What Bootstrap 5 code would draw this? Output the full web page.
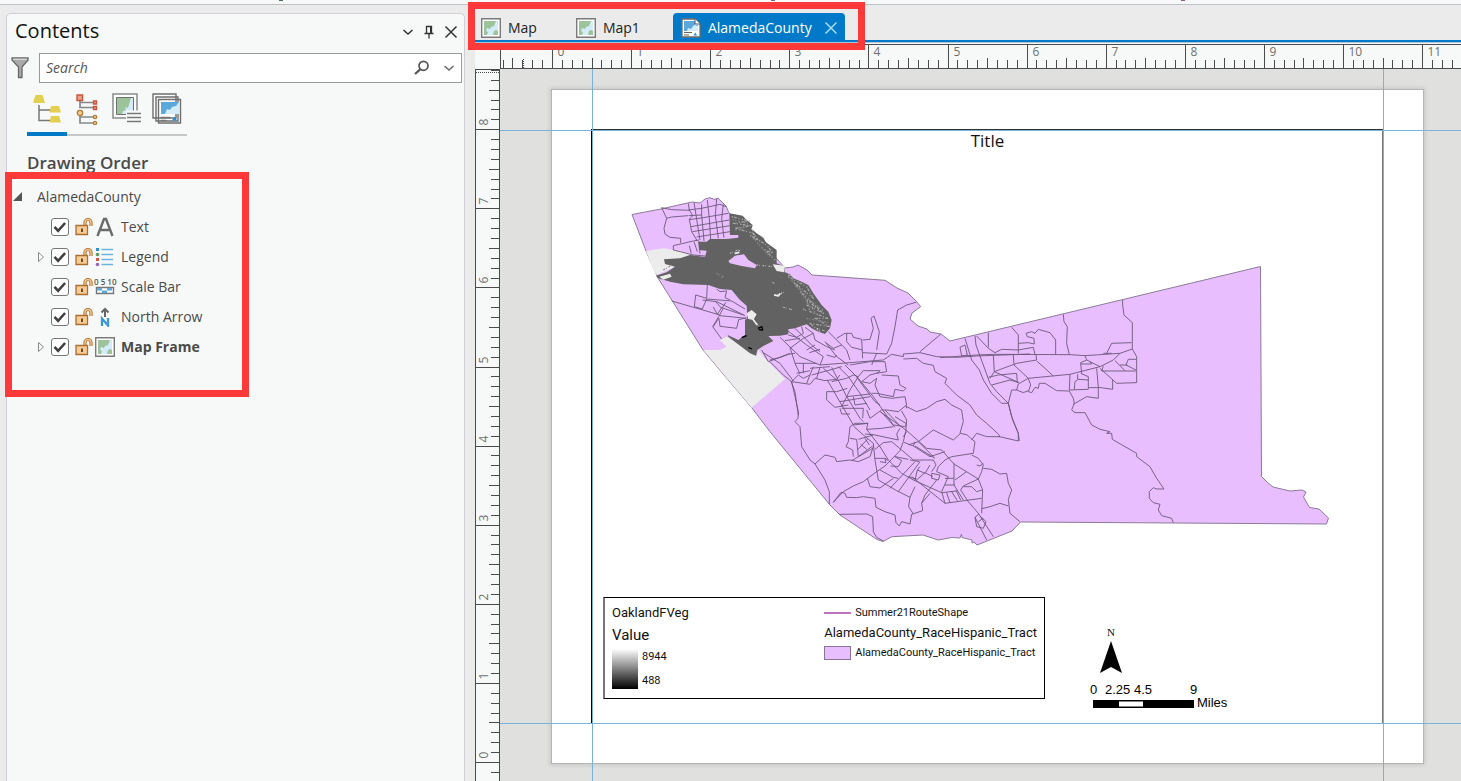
<!DOCTYPE html>
<html lang="en">
<head>
<meta charset="utf-8">
<meta name="viewport" content="width=device-width, initial-scale=1">
<title>AlamedaCounty layout</title>
<link rel="stylesheet" href="https://cdn.jsdelivr.net/npm/bootstrap@5.3.0/dist/css/bootstrap.min.css">
<style>
:root{--ui:"Open Sans","Noto Sans",sans-serif;--line:#4b4b4b;--guide:#79b4d8;--accent:#007ac8;--mark:#fd3a39}
body{font-family:var(--ui);font-size:14px;line-height:20px;color:#4a4a4a;background:#ebebeb;overflow:hidden}
button{background:none;border:0;padding:0;color:inherit}
svg{display:block;flex:none}
.ribbon-edge{height:5px;background:#f7f9f8;border-bottom:1px solid #bfc1c7;overflow:hidden}
.ribbon-edge i{width:4px;height:1px;position:absolute;top:0}
.panes{min-height:0}
.pane{width:459px;margin:8px 10px 0 6px;background:#f7f9f8;border:1px solid #cfd1d6;border-bottom:0;border-radius:5px 5px 0 0}
.pane-title{font-size:20px;line-height:24px;color:#111}
.pane-head{padding:5px 6px 0 8px;height:39px}
.pane-tools{gap:9px;padding-top:5px}
.pane-search{padding:0 2px 0 4px;height:30px}
.find-box{border:1px solid #9a9a9a;background:#fff;margin-left:10px;padding-right:6px}
.find-box input{border:0;outline:0;background:none;font-style:italic;padding:0 6px;color:#4a4a4a;min-width:0}
.find-box input::placeholder{color:#555;opacity:1}
.find-box .more{margin-left:13px}
.view-tabs{margin:9px 0 0 20px;width:160px;border-bottom:2px solid #c6c8c8}
.view-tabs button{width:40px;height:42px;padding-top:1px}
.view-tabs button.active{border-bottom:4px solid var(--accent);margin-bottom:-2px;height:44px}
.pane h2{font-size:17px;line-height:22px;font-weight:600;color:#4a4a4a;margin:16px 0 0 20px}
.tree-wrap{position:relative;margin-top:8px}
.tree li{height:30px;padding-left:30px}
.tree .root{padding-left:6px}
.tree .twist{width:8px;margin-right:6px}
.tree .root .twist{width:10px;margin-right:14px}
.tree .form-check-input{width:18px;height:18px;margin:0 6px 0 0;border:1px solid #777;border-radius:3px;background-color:#fff;flex:none}
.tree .form-check-input:checked{background-size:18px 18px;background-image:url("data:image/svg+xml,%3Csvg xmlns='http://www.w3.org/2000/svg' viewBox='0 0 18 18'%3E%3Cpath d='M3.5 8.8l3.6 4 7-7.8' fill='none' stroke='%23404040' stroke-width='2.6'/%3E%3C/svg%3E")}
.tree .glyph{width:20px;margin:0 6px 0 2px}
.mark-box{position:absolute;border:7px solid var(--mark);pointer-events:none;z-index:5}
.mark-tree{left:-2px;top:-10px;width:244px;height:225px}
.mark-tabs{left:-7px;top:-11px;width:397px;height:48px}
.work{min-width:0}
.tabs{position:relative;margin-top:8px;height:29px;border-bottom:2px solid var(--accent)}
.tabs button{padding:3px 33px 0 6px;color:#222}
.tabs button.active{background:var(--accent);color:#fff;border-radius:4px 4px 0 0;padding:3px 8px 0}
.tabs svg{margin-right:7px}
.tabs button.active .shut{margin:0 0 0 13px}
.sheet-view{display:grid;grid-template-columns:25px 1fr;grid-template-rows:25px 1fr;border-top:1px solid #a9c5d9;background:#f7f9f8;padding-top:1px}
.rule-h{border:solid var(--line);border-width:1px 0 1px 1px}
.rule-v{border:solid var(--line);border-width:1px 1px 0 1px;overflow:hidden}
.rule-h svg,.rule-v svg{width:100%;height:100%;overflow:visible}
.rule-h text,.rule-v text{font-size:12px;fill:#707070}
.rule-h path,.rule-v path{stroke:var(--line);fill:none}
.desk{position:relative;overflow:hidden;background:#e0e0df;padding:21px 0 0 52px}
.paper{width:871px;height:673px;background:#fff;box-shadow:0 0 0 1px #b5b5b5,0 0 4px 2px #c4c4c4;padding:39px 0 0 39px}
.frame{position:relative;width:792px;height:594px;border:solid #000;border-width:1px 1px 0 2px;border-top-color:#333;border-right-color:#777}
.frame>*{position:absolute}
.county{left:0;top:0}
.heading{left:0;right:0;top:0;text-align:center;font-size:17px;line-height:22px;color:#111}
.legend-box{left:10px;top:467px;width:442px;height:102px;border:1px solid #000;border-left:2px solid #777;font:11px/16px Roboto,sans-serif;color:#111;padding:7px}
.legend-box .lg{font-size:13px}
.legend-box .xl{font-size:15px;line-height:20px}
.legend-left{width:213px}
.ramp{width:26px;height:40px;background:linear-gradient(#fff,#000)}
.swatch{width:27px;height:14px;background:#e8beff;border:1px solid #8b7399}
.route{width:27px;height:2px;background:#bf73bd}
.compass{left:506px;top:495px;width:24px;text-align:center;font:11px/15px "Liberation Serif",serif;color:#111}
.scale{left:497px;top:552px;font:13px/15px "Liberation Sans",sans-serif;color:#000}
.guide{position:absolute;background:var(--guide)}
.guide.v{width:1px;top:0;bottom:0}
.guide.h{height:1px;left:0;right:0}
.g1{left:92px}.g2{left:883px}.g3{top:61px}.g4{top:654px}
</style>
</head>
<body class="vh-100 d-flex flex-column">
<svg width="0" height="0" class="position-absolute" aria-hidden="true">
<defs>
<symbol id="lock" viewBox="0 0 18 18"><path d="M10 8V4.500a3 3 0 0 1 6 0V8" fill="none" stroke="#a96f32" stroke-width="3.200"/><path d="M10 8V4.500a3 3 0 0 1 6 0V8" fill="none" stroke="#f5c68b" stroke-width="1.400"/><path d="M1 7.500h11.500v9H1z" fill="#f8cb95" stroke="#a96f32" stroke-width="1.300"/><path d="M6 10.500h2v3.500H6z" fill="#6b4a2b"/></symbol>
<symbol id="mapico" viewBox="0 0 20 20"><path d="M.7.7h18.600v18.600H.7z" fill="#fff" stroke="#7b7b7b" stroke-width="1.400"/><path d="M3 3h14v14H3z" fill="#9cc39a"/><path d="M15 3h2v14H6l1-3-2-1 1-3 3 1 1-2 3-1z" fill="#d4ecfa"/><path d="M12 17l1-4 2-1 2 1v4zM3 13l2-1 1 5H3z" fill="#9cc39a"/></symbol>
<symbol id="twist" viewBox="0 0 8 12"><path d="M1.500 1.500l5 4.500-5 4.500z" fill="#fff" stroke="#8a8a8a"/></symbol>
</defs>
</svg>

<header class="ribbon-edge position-relative flex-shrink-0"><i style="left:279px;background:#4a6b5a"></i><i style="left:771px;background:#866082"></i><i style="left:1181px;background:#866082"></i></header>

<div class="panes d-flex flex-grow-1">
<aside class="pane flex-shrink-0">
  <div class="pane-head d-flex align-items-start">
    <h1 class="pane-title mb-0 fw-normal flex-grow-1">Contents</h1>
    <div class="pane-tools d-flex align-items-center">
      <button aria-label="Menu"><svg width="12" height="16" viewBox="0 0 12 16"><path d="M1.500 6L6 10l4.500-4" fill="none" stroke="#333" stroke-width="1.500"/></svg></button>
      <button aria-label="Pin"><svg width="12" height="16" viewBox="0 0 12 16"><path d="M3.500 2.500h5v7h-5zM1.500 9.500h9M6 9.500v5" fill="none" stroke="#333" stroke-width="1.300"/><path d="M7 3h1.500v6H7z" fill="#333"/></svg></button>
      <button aria-label="Close"><svg width="14" height="16" viewBox="0 0 14 16"><path d="M1.500 2.500l11 11m0-11l-11 11" fill="none" stroke="#333" stroke-width="1.500"/></svg></button>
    </div>
  </div>
  <div class="pane-search d-flex">
    <button aria-label="Filter" class="d-flex align-items-start pt-1"><svg width="18" height="22" viewBox="0 0 18 22"><path d="M1 1h16v2l-6 7v10.500H7.500V10L1 3z" fill="#a9a9a9" stroke="#686868" stroke-width="1.300"/><path d="M2 2.200h14" stroke="#eee"/></svg></button>
    <div class="find-box flex-grow-1 d-flex align-items-center">
      <input type="text" class="flex-grow-1" placeholder="Search" aria-label="Search">
      <button aria-label="Find"><svg width="16" height="16" viewBox="0 0 16 16"><circle cx="9.500" cy="5.800" r="4.500" fill="none" stroke="#555" stroke-width="1.700"/><path d="M6.200 9.400L1 14" stroke="#555" stroke-width="2.200"/></svg></button>
      <button aria-label="Search options" class="more"><svg width="12" height="16" viewBox="0 0 12 16"><path d="M1.500 6L6 10l4.500-4" fill="none" stroke="#666" stroke-width="1.400"/></svg></button>
    </div>
  </div>
  <div class="view-tabs d-flex">
    <button class="active d-flex align-items-start justify-content-center" aria-label="List by drawing order"><svg width="30" height="32" viewBox="0 0 30 32"><path d="M7 12v15.500h12M7 17h12" fill="none" stroke="#777" stroke-width="1.500"/><path d="M3.500 2h7L13 10H1.500v-2zM19 13h8l2 6.500H17.500zM19 23h8l2 6.500H17.500z" fill="#e3cf50"/></svg></button>
    <button class="d-flex justify-content-center" aria-label="List by element type"><svg width="24" height="32" viewBox="0 0 24 32"><path d="M5 7v7.500h15M5 9.500h15M5 19v11h15M5 24h15" fill="none" stroke="#888" stroke-width="1.700"/><path d="M2 2h5.500v5.500H2zM18.500 8h3v3h-3zM18.500 13.500h3v3h-3z" fill="#eaa28e" stroke="#c8553b" stroke-width="1.400"/><g fill="#f8cb95" stroke="#b07830" stroke-width="1.200"><circle cx="5" cy="20" r="2.700"/><circle cx="20" cy="24" r="1.700"/><circle cx="20" cy="30" r="1.600"/></g></svg></button>
    <button class="d-flex justify-content-center" aria-label="List by map frame"><svg width="30" height="32" viewBox="0 0 30 32"><path d="M1 1h24v24H1z" fill="#fff" stroke="#8a8a8a" stroke-width="1.500"/><path d="M4.500 4.500h17v17h-17z" fill="#9cc39a" stroke="#707070"/><path d="M19 5h2v16H10l1-3 3-1-1-3 3 1z" fill="#d4ecfa"/><path d="M14 17.500h16V31H14z" fill="#f7f9f8"/><path d="M15 20.500h14M15 24.500h14M15 28.500h14" stroke="#777" stroke-width="1.500"/></svg></button>
    <button class="d-flex justify-content-center" aria-label="List by map series"><svg width="30" height="32" viewBox="0 0 30 32"><g fill="#fff" stroke="#6e6e6e" stroke-width="1.400"><path d="M1 1h23v24H1zM4 4h22v24H4zM6.500 6.500h22V30h-22z"/></g><path d="M9 9h18v12H9z" fill="#5ba8dd"/><path d="M13 21l2-5 3 1 2-3 4-1 3-4v12z" fill="#d4ecfa"/><path d="M8.500 24.500h10M8.500 27.500h6" stroke="#777" stroke-width="1.300"/><path d="M20 27.500l2.500-4 2.500 4z" fill="#2b8fd0"/></svg></button>
  </div>
  <h2>Drawing Order</h2>
  <div class="tree-wrap">
  <ul class="tree list-unstyled mb-0">
    <li class="root d-flex align-items-center"><svg class="twist" height="10" viewBox="0 0 10 10"><path d="M9 0v9H0z" fill="#555"/></svg>AlamedaCounty</li>
    <li class="d-flex align-items-center"><span class="twist"></span><input class="form-check-input" type="checkbox" id="c1" checked><svg width="18" height="18"><use href="#lock"/></svg><svg class="glyph" height="20" viewBox="0 0 20 20"><path d="M2.500 19L9 2h2l6.500 17M5 13h10" fill="none" stroke="#6b6b6b" stroke-width="2.400"/></svg><label for="c1">Text</label></li>
    <li class="d-flex align-items-center"><svg class="twist" height="12"><use href="#twist"/></svg><input class="form-check-input" type="checkbox" id="c2" checked><svg width="18" height="18"><use href="#lock"/></svg><svg class="glyph" height="20" viewBox="0 0 20 20"><path d="M6.500 2.500H18M6.500 7.500H18M6.500 12.500H18M6.500 17.500H18" stroke="#6cb2df" stroke-width="1.500"/><path d="M1 1h3v3H1z" fill="#2b8fd0"/><circle cx="2.500" cy="7.500" r="1.800" fill="#5d9b5d"/><path d="M1 11h3v3H1z" fill="#d1583c"/><circle cx="2.500" cy="17.500" r="1.800" fill="#9565b8"/></svg><label for="c2">Legend</label></li>
    <li class="d-flex align-items-center"><span class="twist"></span><input class="form-check-input" type="checkbox" id="c3" checked><svg width="18" height="18"><use href="#lock"/></svg><svg class="glyph overflow-visible" height="20" viewBox="0 0 20 20"><path d="M1.500 10.500h17v6h-17z" fill="#fff" stroke="#777" stroke-width="1.400"/><path d="M2 11h5v2.500H2zM12 11h5v2.500h-5zM7 13.500h5V16H7z" fill="#5ba8dd"/><text x="-1" y="8" font-size="8" font-weight="600" fill="#555">0 5 10</text></svg><label for="c3">Scale Bar</label></li>
    <li class="d-flex align-items-center"><span class="twist"></span><input class="form-check-input" type="checkbox" id="c4" checked><svg width="18" height="18"><use href="#lock"/></svg><svg class="glyph" height="20" viewBox="0 0 20 20"><path d="M10 10V2M6.500 5.500L10 2l3.500 3.500" fill="none" stroke="#666" stroke-width="2"/><path d="M7 19v-7.500l6 7V11" fill="none" stroke="#3d97d3" stroke-width="2.300"/></svg><label for="c4">North Arrow</label></li>
    <li class="d-flex align-items-center"><svg class="twist" height="12"><use href="#twist"/></svg><input class="form-check-input" type="checkbox" id="c5" checked><svg width="18" height="18"><use href="#lock"/></svg><svg class="glyph" height="20"><use href="#mapico"/></svg><label for="c5" class="fw-bold">Map Frame</label></li>
  </ul>
  <div class="mark-box mark-tree" aria-hidden="true"></div>
  </div>
</aside>

<main class="work flex-grow-1 d-flex flex-column">
  <div class="tabs d-flex flex-shrink-0">
    <button class="d-flex align-items-center"><svg width="20" height="20"><use href="#mapico"/></svg>Map</button>
    <button class="d-flex align-items-center"><svg width="20" height="20"><use href="#mapico"/></svg>Map1</button>
    <button class="active d-flex align-items-center"><svg width="20" height="20" viewBox="0 0 20 20"><path d="M1 1h13l5 5v13H1z" fill="#fff" stroke="#6e6e6e" stroke-width="1.300"/><path d="M3 3h11v4h3v6H3z" fill="#5ba8dd"/><path d="M6 13l1-3 3 1 3-4 4 1v5z" fill="#d4ecfa"/><path d="M3 14.500h8M3 17h5" stroke="#666" stroke-width="1.200"/><path d="M12.500 17.500l1.800-3 1.800 3z" fill="#2b8fd0"/><path d="M14 1v5h5" fill="#fff" stroke="#555"/></svg>AlamedaCounty<svg class="shut" width="12" height="12" viewBox="0 0 12 12"><path d="M.5.5l11 11m0-11l-11 11" stroke="#a9dcf8" stroke-width="1.500"/></svg></button>
    <div class="mark-box mark-tabs" aria-hidden="true"></div>
  </div>
  <div class="sheet-view flex-grow-1">
    <div></div>
    <div class="rule-h"><svg id="ruleH"></svg></div>
    <div class="rule-v"><svg id="ruleV"></svg></div>
    <div class="desk">
      <div class="paper">
        <div class="frame">
          <svg class="county" width="789" height="592" viewBox="593 130 789 592">
            <path fill="#e8beff" stroke="#8c7b98" stroke-width="1" d="M632 214.500L661 209 683 204 692 202 700 203 705 199 710 197.700 714 199.300 718 198.300 722 202 726 206 729 213 760 240 785 268 793 267 798 265 807 270 812 275 840 277 885 280.300 897 288 908 293 916 301 920.700 306.700 912 313 910 319 918 326 927 329 930 332 941 334 950 341 1260.500 266.500 1261.500 476.500 1267 482 1273 487 1290 491 1302 490 1306 492 1303.500 497 1309.500 507.500 1319 509 1328.500 518 1326.500 524 1020.500 522 1012 531 1002 535 977 545 974 542 972 543 972 540 962 537.500 961.500 534 960 538 952 537.500 938 540 923 535 892 536.700 883 541.500 877 539.500 840 515 829.500 504.500 812 483 770 431.700 751.700 407.700 703 350 658 278 646 251z"/>
            <!-- north-west districts -->
            <g transform="translate(620 185) scale(.3333)" stroke-linejoin="round">
              <path fill="#ececec" d="M78 198L130 190 180 198 212 208 180 225 165 245 110 270 100 255zM300 465L320 455 410 512 415 495 430 515 495 582 395 668 250 495 300 495 320 485z"/>
              <path fill="none" stroke="#6d5878" stroke-width="2.700" d="M125 68L140 100 155 96 205 92M140 100L132 130 135 147 150 157 182 160 182 174M125 68L155 74 210 76M160 182L220 168 237 165M160 182V195L220 210 255 213M208 182L214 205M205 55L208 75 218 92 208 103 215 140 232 168M222 52L228 90 240 165M245 58V90L252 168M262 45L268 100 272 165M290 42L286 90 295 160M310 58L305 100 312 158M205 75L245 70 300 58 318 65M206 92L245 90M208 104L250 98 325 85M213 125L328 105M217 140L330 122M230 156L330 140M222 170L232 200M237 168L240 206M262 300L260 340 227 330 223 365 247 372 260 342 335 348 375 372M290 312L300 320 320 318 315 338 330 345M155 348L300 390M300 392L378 400M248 345L290 350 375 392M285 348L305 370 318 352M280 366L292 388 305 368 370 390M310 370L296 395 278 425 305 462M297 400L300 424 350 430 356 404 380 398M280 425L296 400M425 495L445 530 505 508 525 505M430 503L480 535 520 588M513 588L525 620 535 690"/>
              <path fill="#626262" d="M328 85L345 88 368 92 380 105 398 120 395 132 410 145 430 158 438 172 470 195 470 235 495 245 495 262 510 268 520 280 540 288 565 300 580 325 605 360 625 380 635 405 630 430 615 447 595 440 575 430 560 418 525 430 505 433 505 448 480 452 445 453 460 468 430 483 412 495 408 512 390 505 325 455 323 450 355 465 375 450 375 405 382 400 380 362 360 345 335 315 300 312 265 300 190 298 150 290 115 280 108 272 140 262 165 245 135 237 132 223 180 220 210 210 255 216 260 197 237 195 235 170 260 170 270 162 320 162 355 158 355 150 330 150z"/>
              <path fill="#e8beff" d="M325 228L345 212 372 208 385 225 410 240 405 250 365 243 330 235z"/>
              <path fill="#ececec" d="M380 385L395 375 410 388 400 405 385 402zM118 275L150 266 155 275 130 284zM458 238L495 242 493 262 470 258z"/>
              <g fill="none" stroke-width="4">
                <path stroke="#a5a5a5" stroke-dasharray="4 3 9 5 3 7" d="M335 95L388 108 340 115 392 122 345 130 400 145 415 165 392 152 440 180 460 205 435 195 465 225M505 275L560 305 580 340 520 290 550 330 590 365 610 385 560 345 570 380 625 400 585 400 630 425 570 415 600 440"/>
                <path stroke="#888" stroke-dasharray="5 4 3 6" d="M337 103L385 116M345 135L382 125M400 160L450 215M290 265L310 275 300 282M515 285L575 350 610 375M540 320L590 390M560 400L625 412M130 255L160 238"/>
                <path stroke="#ddd" stroke-width="3" stroke-dasharray="4 3 2 9" d="M330 205L360 192 350 215M410 240L460 245M458 292L465 296M465 330L492 322 470 335M490 367L520 375M550 372L560 378M395 130L408 165M505 270L525 275M560 360L600 380M590 430L615 438M398 400L415 422"/>
                <path stroke="#eee" stroke-width="5" d="M398 402L412 420M462 330L475 333 480 325M344 205L358 202"/>
                <path stroke="#000" d="M414 430L426 425 428 435 416 434M365 458L380 452M385 488L396 492"/>
              </g>
            </g>
            <!-- central districts -->
            <g transform="translate(770 250) scale(.3333)" fill="none" stroke="#6d5878" stroke-width="2.700" stroke-linejoin="round">
              <path d="M65 395L75 440 85 485 84 505 75 515 90 530 95 590 120 630 135 642 165 615 195 622 200 635 240 630 265 635 300 620 310 590M135 642L165 690 178 725V763M0 330L30 322 60 310M0 335L40 375 65 395 120 403 135 385 165 392 200 388 210 375"/>
              <path d="M30 262L90 320 150 345 240 338 340 330 365 313 400 320V312L450 308 500 320 560 322 620 318 780 312M400 327L440 325 460 340 490 346 495 365 530 385 525 400 560 435 600 465 620 495 650 520 688 555V562M50 240L110 285 160 320 150 345M75 235L130 290 150 305M60 295L100 265 130 250M55 255L80 262 100 250 95 230M105 232L130 250 135 270M45 272L90 265M60 292L75 340 90 372M110 300L135 285M118 308L150 298M165 275L200 320 235 345M135 270L170 290 195 300M170 315L195 322 200 315M175 245L230 300 240 330M200 265L225 250 245 250 250 262 275 268 278 325M230 250V275L245 292 278 300M278 270L300 268 310 235 303 205 312 198 328 245 320 300M278 308L350 312 365 280 375 230 383 180 410 165 438 157M320 310L305 345M450 305L512 253M170 280L190 295 215 285"/>
              <path d="M172 390L215 465 250 525M185 352L230 440 270 505 280 515M205 350L235 380 270 430 300 480M225 345L265 385 310 440 370 525 405 530M260 382L315 455 330 465M185 395L230 385 250 375 265 380M200 425L232 415M170 425H200M170 425V450L195 472 235 465M210 475L215 492 240 492M215 475H280L278 505M265 380L240 420 215 470M210 455L300 440M230 440L300 432M250 440L255 465 290 460M250 525L295 520M300 505L335 480M290 480L300 505M75 340L140 340M80 370L120 362M100 340V370M130 350L110 400M150 352L140 385M160 355L200 390M125 375L180 360 215 350M120 355L180 350M65 395L85 375 100 385 120 375M240 345L300 335 345 335 350 365 320 370M265 380L280 362 330 362 325 368 300 375 275 395 300 400 320 385M335 375L385 378 390 405 408 415 400 423 375 418 370 440 320 430 305 430M320 385L315 405 330 440 365 445 405 440 410 465 385 485 350 480 335 480M408 465L410 475M395 483L410 510 408 530M345 480L392 530M335 487L375 532"/>
              <path d="M410 470L440 485 470 475 500 455 525 448 545 465 575 480 580 515 570 550M605 570L620 550 650 560 688 560 745 573V550L725 500 715 460"/>
            </g>
            <!-- southern districts -->
            <g transform="translate(830 410) scale(.3333)" fill="none" stroke="#6d5878" stroke-width="2.700" stroke-linejoin="round">
              <path d="M10 277L40 245 70 228 100 215 140 185 165 168 185 148 210 122M10 277L33 247 45 250 50 262 80 263 100 260 135 265 138 292 165 305 195 315 198 338 208 348 215 335 240 342 245 313 278 302 275 280 285 255 320 210M28 313L110 312 128 320 130 365 140 382 160 393M70 48L100 75 130 100 135 150 145 210 200 242 240 262 236 290 250 312M110 58L150 110 175 150 215 190 250 210 335 248 380 243M105 72L130 74 205 90M150 5L228 60 290 115 335 120 372 162 445 207 458 240 455 310M60 50L75 40 113 40 110 58 155 55 190 50M195 20L228 40 228 60M60 50L55 95 48 110 68 120 70 140M60 85L80 88 85 140M85 88L130 75M82 120L112 88M85 140L128 108M92 103L110 118M65 152L128 115M105 85L118 105"/>
              <path d="M135 118L160 98 185 95 215 120 250 150 310 150M205 90L200 72 210 55M228 60L220 95 210 122M230 65L220 80M235 105L265 95 310 60 370 90 392 70 412 75 422 85 435 95 430 130 365 140 345 150 325 170M222 97L250 108 255 95M250 108L300 140M265 95L310 140M300 140L345 125M255 108L315 145M135 145L165 145 175 152M150 155L168 158 165 145M150 180L190 202 205 205M112 205L120 230 150 234 190 205M255 155L180 235M270 155L205 245M235 148L195 140M195 140L215 152 205 170 182 168M310 150L318 165 305 185M240 150L268 155M262 180L285 190 300 165M235 200L262 208 285 188 308 200M270 170L262 180 255 210M245 200L345 280 455 265M300 250L275 280"/>
              <path d="M305 190L330 195 325 210 305 205zM325 170L320 185 355 200M355 200L335 245 345 280M345 225H375M372 160V225L400 270M375 210L410 185M345 205L372 205M350 248L360 278M365 245L382 272M378 240L392 270M445 207L400 228 392 240 415 275 445 310 490 380M400 230L425 230 440 245 457 240M435 322L470 390M447 312L435 322 440 350 460 355 468 335 450 318M445 335L460 325M425 135L445 145 460 165 455 185 445 207M460 160L450 168 440 165M460 175L485 178 510 192 530 190 535 220 545 240 535 268 540 310 570 335M455 296L480 290 510 280 535 288M255 230L240 262"/>
            </g>
            <!-- eastern districts -->
            <g transform="translate(940 260) scale(.3333)" fill="none" stroke="#6d5878" stroke-width="2.700" stroke-linejoin="round">
              <path d="M75 235L95 300 118 330 130 360 155 400 185 430 205 430M105 228L108 255 150 370 170 395 205 430M60 262L75 255 82 285 65 288zM0 293L110 285 160 283 390 284 435 287 540 280 577 267M110 228L145 265 165 278 185 268 235 270 280 262 285 283M145 218V262M215 202L235 225V280M235 250L265 248 283 252 282 235 262 230 258 220 275 215 285 220 295 208 330 218 347 240V283M160 285L163 335 230 310 290 300 288 284M220 285L222 315 265 355M163 335L235 367M163 335L150 355M145 352L175 345 230 340 232 368M155 375L210 360 237 368M265 355L390 343 480 320M290 303L315 325 340 348M370 163L372 185 382 200 380 250 388 284M548 120V135L552 165 577 188V267L590 290V368L530 370 480 325"/>
              <path d="M435 287L440 300 480 320 520 300 540 280M425 340L422 308 440 300M422 312H455L450 305M500 280L515 250 575 248M490 280H515M525 302L555 332M540 315H562M485 333H588M485 333L490 318M558 315L565 298 588 298M558 315L588 330M390 343L388 390 445 388V360L413 358V343M403 388L405 365 413 360M422 340L445 350V362M470 325L475 382 518 388V360M475 382V415L440 410 400 433M447 383H475M265 355L272 375 265 395 275 398 285 382 295 385 298 370 315 370 350 392 388 393 400 415 403 430 395 450 405 458 435 458 455 495 480 508 510 515 500 520 515 520 517 538 555 560 590 580 590 590 630 620 650 655 672 687 650 687 640 683 628 695V715L640 728 660 733 655 750 665 767 695 775 700 788M205 430L215 390 230 390 235 372 265 355M230 390L250 398 265 392M205 430L218 480 235 520 238 543"/>
            </g>
          </svg>
          <div class="heading">Title</div>
          <div class="legend-box d-flex">
            <div class="legend-left d-flex flex-column">
              <div class="lg">OaklandFVeg</div>
              <div class="xl mt-1 mb-1">Value</div>
              <div class="d-flex gap-1"><div class="ramp"></div><div class="d-flex flex-column justify-content-between"><span>8944</span><span>488</span></div></div>
            </div>
            <div class="text-nowrap d-flex flex-column gap-1">
              <div class="d-flex align-items-center gap-1"><span class="route"></span>Summer21RouteShape</div>
              <div class="lg">AlamedaCounty_RaceHispanic_Tract</div>
              <div class="d-flex align-items-center gap-1"><span class="swatch"></span>AlamedaCounty_RaceHispanic_Tract</div>
            </div>
          </div>
          <div class="compass">N<svg class="mx-auto" width="22" height="34" viewBox="0 0 22 34"><path d="M11 1l11 32-11-6-11 6z"/></svg></div>
          <svg class="scale overflow-visible" width="140" height="30" viewBox="0 0 140 30"><text x="0" y="12">0</text><text x="15" y="12">2.25</text><text x="44" y="12">4.5</text><text x="100" y="12">9</text><text x="107" y="25">Miles</text><path d="M3 18h101v8H3z"/><path d="M29 19.500h24v5H29z" fill="#fff"/></svg>
        </div>
      </div>
      <div class="guide v g1"></div><div class="guide v g2"></div><div class="guide h g3"></div><div class="guide h g4"></div>
    </div>
  </div>
</main>
</div>

<script src="https://cdn.jsdelivr.net/npm/bootstrap@5.3.0/dist/js/bootstrap.bundle.min.js"></script>
<script>
// Rulers: one inch is 79.1 px on screen, with a tick every eighth of an inch.
const inch = 79.1, snap = v => Math.round(v) - 0.5;
function drawRuler(svg, origin, length, vertical) {
  let ticks = '', labels = '';
  for (let k = -16; k < 400; k++) {
    const p = snap(vertical ? origin - k * inch / 8 : origin + k * inch / 8);
    if (p < 0 || p > length) continue;
    const start = k % 8 === 0 ? 0 : k % 4 === 0 ? 13 : 15;
    ticks += vertical ? `M${start} ${p}H24` : `M${p} ${start}V24`;
    if (k % 8 === 0 && k >= 0) {
      labels += vertical
        ? `<text transform="translate(12 ${p - 4}) rotate(-90)">${k / 8}</text>`
        : `<text x="${p + 5}" y="11">${k / 8}</text>`;
    }
  }
  const pointer = vertical ? 'M0 2.5H24' : 'M22.5 14V24';
  svg.innerHTML = `<path d="${ticks}"/><path d="${pointer}" stroke-dasharray="1 1"/>${labels}`;
}
function drawRulers() {
  const h = document.getElementById('ruleH'), v = document.getElementById('ruleV');
  drawRuler(h, 52, h.getBoundingClientRect().width, false);
  drawRuler(v, 693, v.getBoundingClientRect().height, true);
}
drawRulers();
addEventListener('resize', drawRulers);
</script>
</body>
</html>
